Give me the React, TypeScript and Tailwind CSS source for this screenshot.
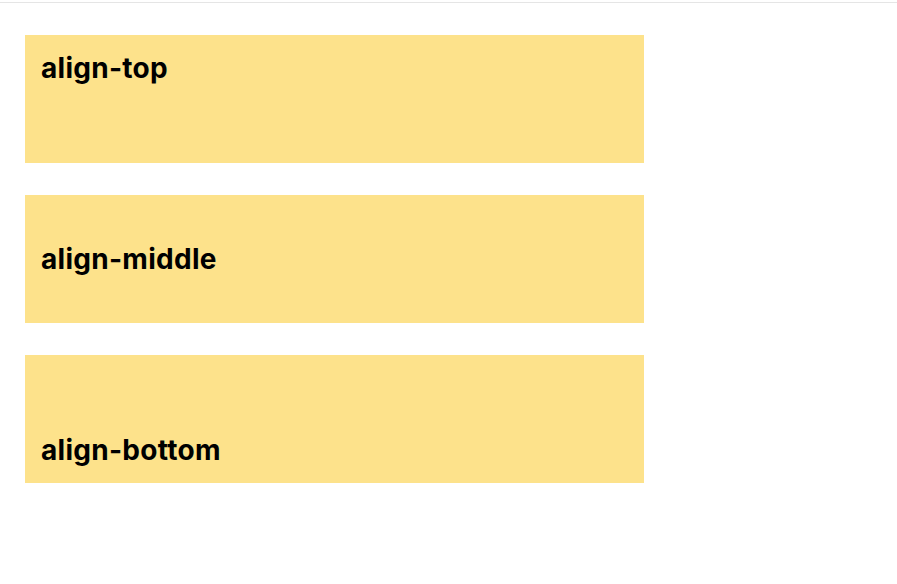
const rows = [
  { label: 'align-top', align: 'items-start' },
  { label: 'align-middle', align: 'items-center' },
  { label: 'align-bottom', align: 'items-end' },
];

export default function App() {
  return (
    <div className="min-h-[584px] bg-white" style={{ fontFamily: 'Inter, "Noto Sans", sans-serif' }}>
      <div className="h-[2px]" />
      <div className="border-t border-[#e5e5e5]" />
      <div className="flex flex-col gap-8 pl-[25px] pt-8">
        {rows.map(row => (
          <div key={row.label} className={`flex ${row.align} h-32 w-[619px] bg-[#fde28b] p-4`}>
            <span className="text-[28px] leading-[34px] tracking-[0.01em] font-bold text-black">{row.label}</span>
          </div>
        ))}
      </div>
    </div>
  );
}
